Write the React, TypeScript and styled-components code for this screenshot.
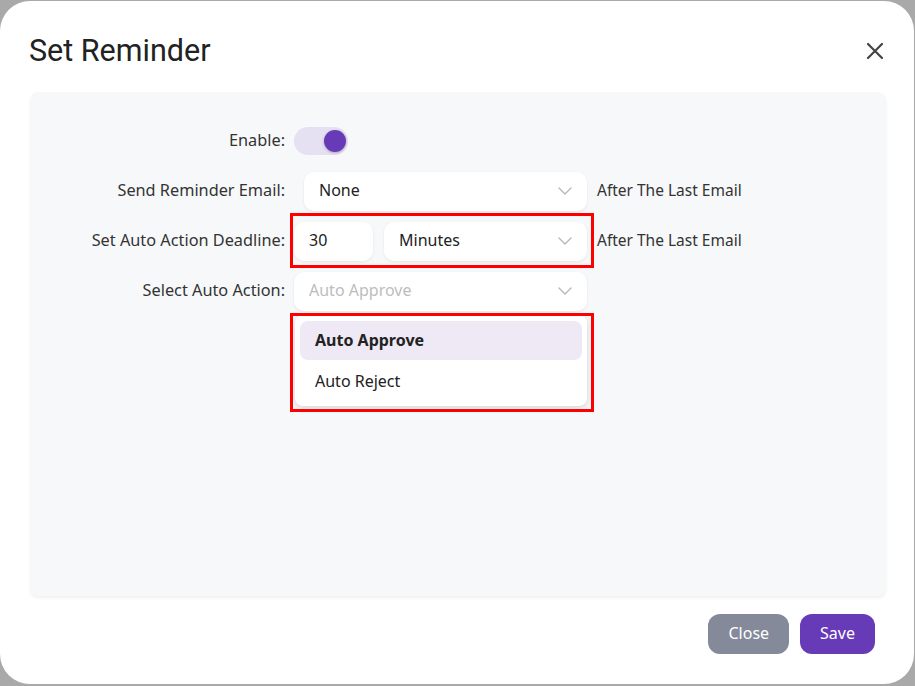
import styled, { createGlobalStyle } from 'styled-components';

const GlobalStyle = createGlobalStyle`
  html, body {
    margin: 0;
    padding: 0;
    background: #a9a9a9;
  }
  * {
    box-sizing: border-box;
  }
`;

const Page = styled.div`
  width: 915px;
  height: 686px;
  padding: 1px 1px 2px 0;
  font-family: 'Noto Sans', 'Open Sans', sans-serif;
  color: #333;
`;

const Modal = styled.div`
  height: 100%;
  background: #fff;
  border-radius: 30px;
  display: flex;
  flex-direction: column;
`;

const Header = styled.div`
  height: 91px;
  display: flex;
  align-items: center;
  justify-content: space-between;
  padding: 8px 30px 0 29px;
`;

const Title = styled.h2`
  margin: 0;
  font-family: Roboto, 'Noto Sans', sans-serif;
  font-weight: 400;
  font-size: 30.5px;
  color: #222;
`;

const CloseIcon = styled.button`
  border: none;
  background: none;
  padding: 0;
  width: 18px;
  height: 18px;
  display: flex;
  cursor: pointer;
`;

const Panel = styled.div`
  flex: 1;
  margin: 0 28px 0 30px;
  background: #f7f8fa;
  border-radius: 8px;
  box-shadow: 0 2px 3px rgba(0, 0, 0, 0.06);
  padding-top: 29px;
  display: flex;
  flex-direction: column;
  gap: 10px;
`;

const Row = styled.div`
  display: flex;
  align-items: center;
  height: 40px;
  position: relative;
`;

const Label = styled.div<{ $gap?: number }>`
  width: 255px;
  text-align: right;
  font-size: 16.3px;
  color: #333;
  padding-bottom: 3px;
  margin-right: ${(p) => p.$gap ?? 9}px;
`;

const Toggle = styled.div`
  width: 54px;
  height: 28px;
  border-radius: 14px;
  background: #e6e0f3;
  position: relative;
  &::after {
    content: '';
    position: absolute;
    right: 2px;
    top: 3px;
    width: 22px;
    height: 22px;
    border-radius: 50%;
    background: #673ab7;
    box-shadow: 0 1px 3px rgba(0, 0, 0, 0.25);
  }
`;

const Field = styled.div<{ $width: number; $muted?: boolean }>`
  width: ${(p) => p.$width}px;
  height: 39px;
  background: #fff;
  border-radius: 10px;
  box-shadow: 0 1px 3px rgba(0, 0, 0, 0.08);
  display: flex;
  align-items: center;
  justify-content: space-between;
  padding: 0 15px 3px 15px;
  font-size: 16px;
  color: ${(p) => (p.$muted ? '#bdbdbd' : '#222')};
  svg {
    margin-top: 3px;
  }
`;

const Suffix = styled.span`
  margin-left: 10px;
  padding-bottom: 3px;
  font-size: 15.5px;
  color: #333;
`;

const Group = styled.div`
  display: flex;
  gap: 11px;
  position: relative;
  &::after {
    content: '';
    position: absolute;
    inset: -9px -7px -7px -4px;
    border: 3px solid #ff0000;
    pointer-events: none;
  }
`;

const Menu = styled.div`
  position: absolute;
  left: 265px;
  top: 44px;
  width: 292px;
  background: #fff;
  border-radius: 8px;
  box-shadow: 0 2px 6px rgba(0, 0, 0, 0.15);
  padding: 6px 5px 5px;
  display: flex;
  flex-direction: column;
  gap: 2px;
  z-index: 2;
  &::after {
    content: '';
    position: absolute;
    inset: -2px -7px -6px -5px;
    border: 3px solid #ff0000;
    pointer-events: none;
  }
`;

const Option = styled.div<{ $active?: boolean }>`
  height: 39px;
  display: flex;
  align-items: center;
  padding: 0 15px 2px;
  border-radius: 8px;
  font-size: 16px;
  color: #222;
  font-weight: ${(p) => (p.$active ? 700 : 400)};
  background: ${(p) => (p.$active ? '#efe9f6' : 'transparent')};
`;

const Footer = styled.div`
  height: 88px;
  display: flex;
  align-items: center;
  justify-content: flex-end;
  gap: 11px;
  padding: 0 39px 12px 0;
`;

const Button = styled.button<{ $primary?: boolean }>`
  height: 40px;
  padding: 0 20px 2px;
  border: none;
  border-radius: 12px;
  font-family: 'Noto Sans', sans-serif;
  font-size: 16px;
  color: #fff;
  background: ${(p) => (p.$primary ? '#673ab7' : '#858a9a')};
  cursor: pointer;
`;

function Chevron() {
  return (
    <svg width="14" height="8" viewBox="0 0 14 8" fill="none">
      <path d="M1 1l6 6 6-6" stroke="#b5b5b5" strokeWidth="1.3" strokeLinecap="round" strokeLinejoin="round" />
    </svg>
  );
}

export default function App() {
  return (
    <Page>
      <GlobalStyle />
      <Modal>
        <Header>
          <Title>Set Reminder</Title>
          <CloseIcon aria-label="close">
            <svg width="18" height="18" viewBox="0 0 18 18">
              <path d="M2 2l14 14M16 2L2 16" stroke="#444" strokeWidth="2.2" strokeLinecap="round" />
            </svg>
          </CloseIcon>
        </Header>
        <Panel>
          <Row>
            <Label>Enable:</Label>
            <Toggle />
          </Row>
          <Row>
            <Label $gap={19}>Send Reminder Email:</Label>
            <Field $width={283}>
              None
              <Chevron />
            </Field>
            <Suffix>After The Last Email</Suffix>
          </Row>
          <Row>
            <Label>Set Auto Action Deadline:</Label>
            <Group>
              <Field $width={79}>30</Field>
              <Field $width={203}>
                Minutes
                <Chevron />
              </Field>
            </Group>
            <Suffix>After The Last Email</Suffix>
          </Row>
          <Row>
            <Label>Select Auto Action:</Label>
            <Field $width={293} $muted>
              Auto Approve
              <Chevron />
            </Field>
            <Menu>
              <Option $active>Auto Approve</Option>
              <Option>Auto Reject</Option>
            </Menu>
          </Row>
        </Panel>
        <Footer>
          <Button>Close</Button>
          <Button $primary>Save</Button>
        </Footer>
      </Modal>
    </Page>
  );
}
